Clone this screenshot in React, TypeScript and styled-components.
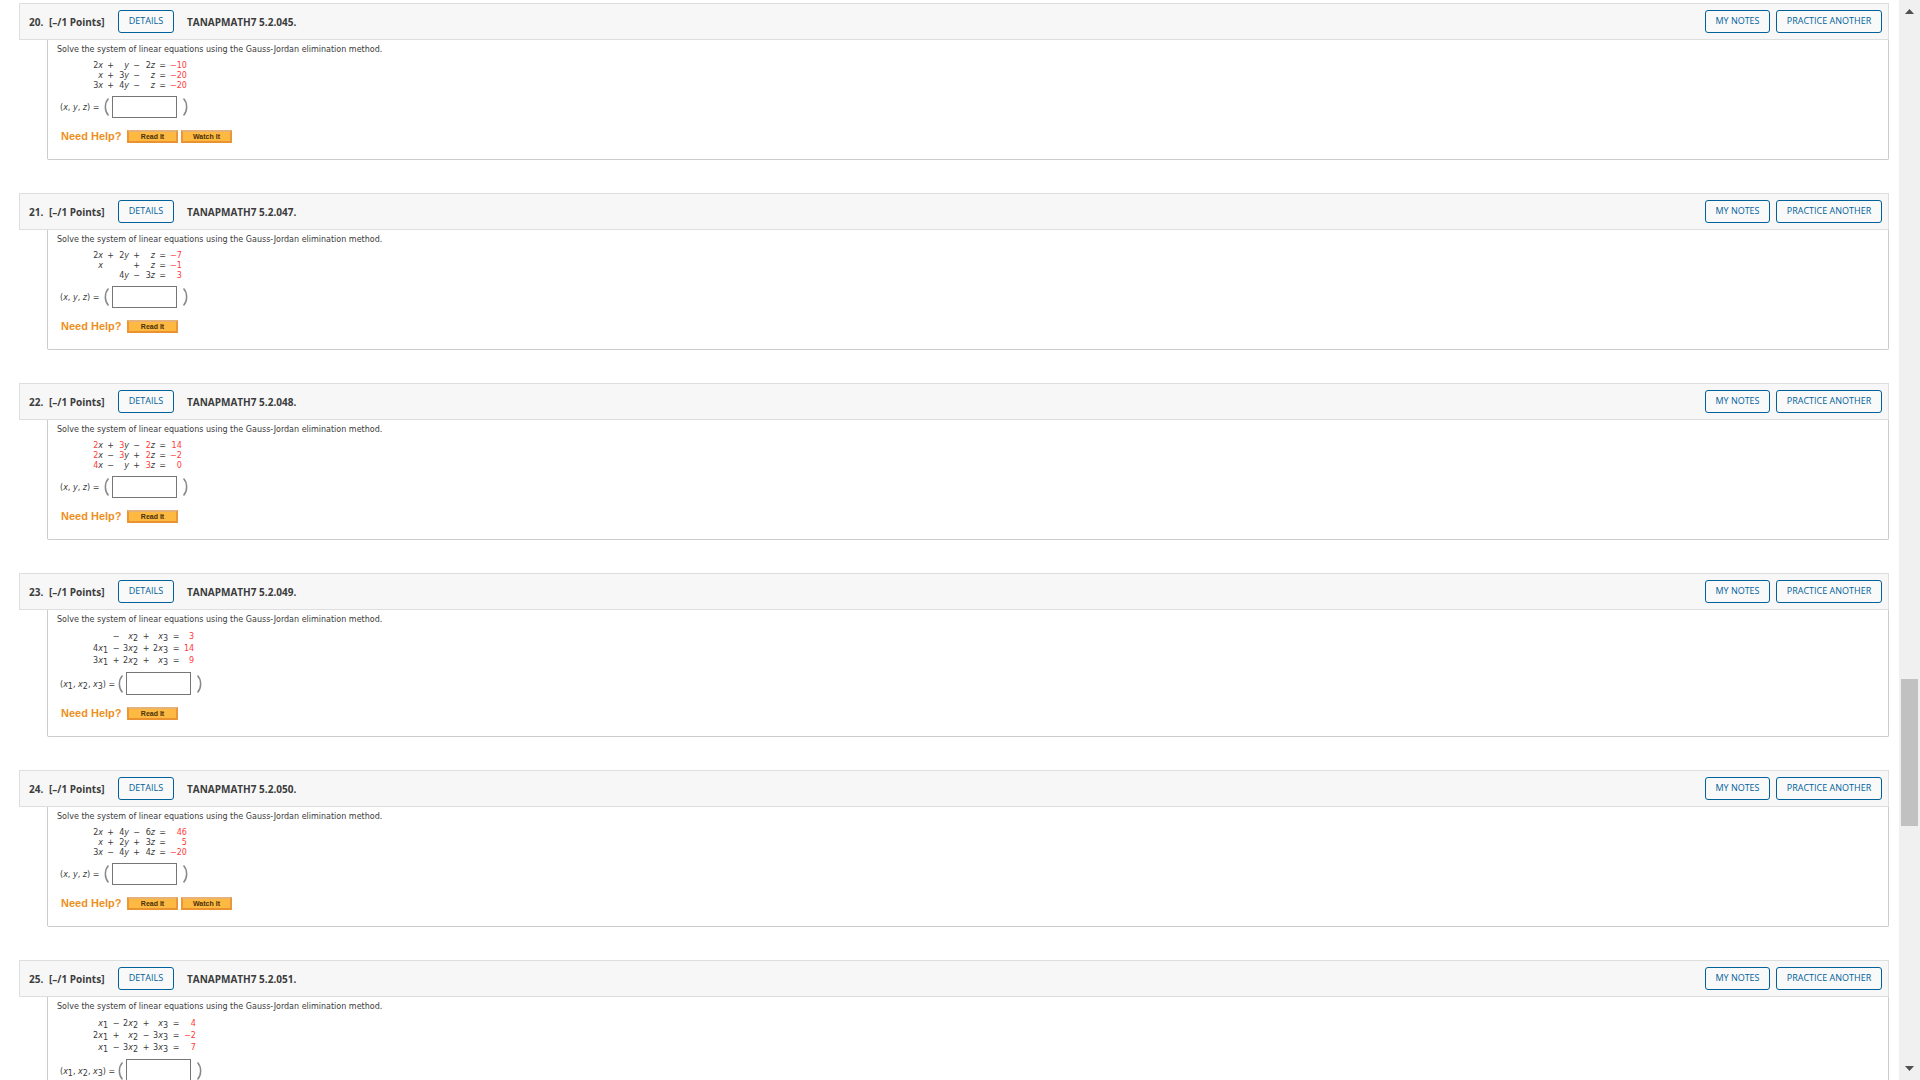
import React from "react";
import styled, { createGlobalStyle } from "styled-components";

const GlobalStyle = createGlobalStyle`
  *, *::before, *::after { box-sizing: border-box; }
  body { margin: 0; background: #fff; overflow: hidden; }
`;

const sans = `"Open Sans", "Noto Sans", sans-serif`;
const verdana = `Verdana, "DejaVu Sans", sans-serif`;
const arial = `Arial, "Liberation Sans", sans-serif`;

const Page = styled.div`
  display: flex;
  height: 100vh;
  overflow: hidden;
`;

const Questions = styled.main`
  flex: 1;
  min-width: 0;
  display: flex;
  flex-direction: column;
  gap: 33px;
  padding: 3px 10px 0 19px;
  overflow: hidden;
`;

const Question = styled.article`
  flex: none;
`;

const Header = styled.header`
  display: flex;
  align-items: center;
  height: 37px;
  padding: 0 6px 0 9px;
  border: 1px solid #dedede;
  background: #f7f7f7;
  color: #3c3c3c;
  font: 700 10px/14px ${sans};
`;

const Number = styled.span`
  width: 20px;
`;

const Points = styled.span`
  width: 69px;
  white-space: nowrap;
`;

const Code = styled.h2`
  flex: 1;
  margin: 0 0 0 13px;
  font: inherit;
`;

const HeaderButton = styled.button<{ $width: number }>`
  width: ${(p) => p.$width}px;
  height: 23px;
  padding: 0 0 2px;
  border: 1px solid #00629b;
  border-radius: 3px;
  background: #f9f9f9;
  color: #00629b;
  font: 400 9px/12px ${sans};
  white-space: nowrap;
`;

const Actions = styled.div`
  display: flex;
  gap: 6px;
`;

const Body = styled.div`
  margin-left: 28px;
  padding: 5px 9px 16px;
  border: 1px solid #ccc;
  border-top: 0;
  border-radius: 0 0 2px 2px;
  color: #3a3a3a;
  font: 400 8px/10px ${verdana};
`;

const Prompt = styled.p`
  margin: 0 0 6px;
`;

const System = styled.div<{ $subscripts: boolean }>`
  display: grid;
  grid-template-columns: ${(p) =>
    p.$subscripts ? "15px 16px 14px 16px 14px 16px max-content" : "10px 15px 11px 15px 11px 15px max-content"};
  grid-auto-rows: ${(p) => (p.$subscripts ? 12 : 10)}px;
  line-height: ${(p) => (p.$subscripts ? 12 : 10)}px;
  margin-left: 36px;
`;

const Term = styled.span`
  display: flex;
  justify-content: flex-end;
  white-space: nowrap;
`;

const Operator = styled.span`
  text-align: center;
`;

const Value = styled.span`
  color: #ff3a3a;
`;

const Sub = styled.sub`
  font-size: 8px;
  line-height: 0;
  vertical-align: -2px;
`;

const Answer = styled.div<{ $subscripts: boolean }>`
  display: flex;
  align-items: center;
  height: ${(p) => (p.$subscripts ? 23 : 22)}px;
  margin: 5px 0 12px 3px;
`;

const AnswerLabel = styled.label<{ $subscripts: boolean }>`
  width: ${(p) => (p.$subscripts ? 58 : 44)}px;
  padding-top: 2px;
  white-space: nowrap;
`;

const Paren = styled.svg`
  width: 5px;
  height: 18px;
  fill: none;
  stroke: #888;
  stroke-width: 1.5;
`;

const AnswerInput = styled.input`
  width: 65px;
  height: 100%;
  margin: 0 6px 0 3px;
  padding: 1px 3px;
  border: 1px solid #767676;
  font: inherit;
`;

const Help = styled.div`
  display: flex;
  align-items: center;
  gap: 3px;
  height: 13px;
  margin-left: 4px;
`;

const HelpLabel = styled.span`
  width: 63px;
  color: #ee8f22;
  font: 700 11px/13px ${arial};
  white-space: nowrap;
`;

const HelpButton = styled.button`
  width: 51px;
  height: 13px;
  padding: 0;
  border: 2px solid;
  border-color: #e6b27a #e9973a #e9922f #e9973a;
  background: #fdb941;
  color: #4a300c;
  font: 700 7px/9px ${arial};
`;

const Scrollbar = styled.aside`
  flex: none;
  display: flex;
  flex-direction: column;
  align-items: center;
  justify-content: space-between;
  width: 21px;
  padding: 9px 0;
  background: #f0f0f0;
`;

const Arrow = styled.svg`
  flex: none;
  width: 9px;
  height: 5px;
  fill: #505050;
`;

const Track = styled.div`
  flex: 1;
  display: flex;
  flex-direction: column;
  align-items: center;
`;

const Spacer = styled.div<{ $grow: number }>`
  flex: ${(p) => p.$grow} 1 0;
`;

const Thumb = styled.div`
  flex: none;
  width: 17px;
  height: 147px;
  background: #c1c1c1;
`;

type Row = { cells: string[]; value: string };

type Problem = {
  number: number;
  code: string;
  rows: Row[];
  subscripts?: boolean;
  redCoefficients?: boolean;
  help: string[];
};

const row = (cells: string, value: string): Row => ({ cells: cells.split(","), value });

const problems: Problem[] = [
  {
    number: 20,
    code: "5.2.045",
    help: ["Read It", "Watch It"],
    rows: [row("2x,+,y,−,2z", "−10"), row("x,+,3y,−,z", "−20"), row("3x,+,4y,−,z", "−20")],
  },
  {
    number: 21,
    code: "5.2.047",
    help: ["Read It"],
    rows: [row("2x,+,2y,+,z", "−7"), row("x,,,+,z", "−1"), row(",,4y,−,3z", "3")],
  },
  {
    number: 22,
    code: "5.2.048",
    help: ["Read It"],
    redCoefficients: true,
    rows: [row("2x,+,3y,−,2z", "14"), row("2x,−,3y,+,2z", "−2"), row("4x,−,y,+,3z", "0")],
  },
  {
    number: 23,
    code: "5.2.049",
    help: ["Read It"],
    subscripts: true,
    rows: [row(",−,x2,+,x3", "3"), row("4x1,−,3x2,+,2x3", "14"), row("3x1,+,2x2,+,x3", "9")],
  },
  {
    number: 24,
    code: "5.2.050",
    help: ["Read It", "Watch It"],
    rows: [row("2x,+,4y,−,6z", "46"), row("x,+,2y,+,3z", "5"), row("3x,−,4y,+,4z", "−20")],
  },
  {
    number: 25,
    code: "5.2.051",
    help: [],
    subscripts: true,
    rows: [row("x1,−,2x2,+,x3", "4"), row("2x1,+,x2,−,3x3", "−2"), row("x1,−,3x2,+,3x3", "7")],
  },
];

function Monomial({ text, red }: { text: string; red?: boolean }) {
  const match = /^(\d*)([xyz])(\d*)$/.exec(text);
  if (!match) return <Term />;
  const [, coefficient, variable, index] = match;
  return (
    <Term>
      <span>
        {red ? <Value>{coefficient}</Value> : coefficient}
        <i>{variable}</i>
        {index && <Sub>{index}</Sub>}
      </span>
    </Term>
  );
}

function ProblemCard({ problem }: { problem: Problem }) {
  const subscripts = Boolean(problem.subscripts);
  const inputId = `answer-${problem.number}`;
  return (
    <Question>
      <Header>
        <Number>{problem.number}.</Number>
        <Points>[–/1 Points]</Points>
        <HeaderButton $width={56}>DETAILS</HeaderButton>
        <Code>TANAPMATH7 {problem.code}.</Code>
        <Actions>
          <HeaderButton $width={65}>MY NOTES</HeaderButton>
          <HeaderButton $width={106}>PRACTICE ANOTHER</HeaderButton>
        </Actions>
      </Header>
      <Body>
        <Prompt>Solve the system of linear equations using the Gauss-Jordan elimination method.</Prompt>
        <System $subscripts={subscripts}>
          {problem.rows.map((r, i) => (
            <React.Fragment key={i}>
              {r.cells.map((cell, j) =>
                j % 2 ? (
                  <Operator key={j}>{cell}</Operator>
                ) : (
                  <Monomial key={j} text={cell} red={problem.redCoefficients} />
                ),
              )}
              <Operator>=</Operator>
              <Term>
                <Value>{r.value}</Value>
              </Term>
            </React.Fragment>
          ))}
        </System>
        <Answer $subscripts={subscripts}>
          <AnswerLabel htmlFor={inputId} $subscripts={subscripts}>
            {subscripts ? (
              <>
                (<i>x</i>
                <Sub>1</Sub>, <i>x</i>
                <Sub>2</Sub>, <i>x</i>
                <Sub>3</Sub>) =
              </>
            ) : (
              <>
                (<i>x</i>, <i>y</i>, <i>z</i>) =
              </>
            )}
          </AnswerLabel>
          <Paren viewBox="0 0 5 18" aria-hidden="true">
            <path d="M4.5 0.5C0.3 5 0.3 13 4.5 17.5" />
          </Paren>
          <AnswerInput id={inputId} type="text" />
          <Paren viewBox="0 0 5 18" aria-hidden="true">
            <path d="M0.5 0.5C4.7 5 4.7 13 0.5 17.5" />
          </Paren>
        </Answer>
        {problem.help.length > 0 && (
          <Help>
            <HelpLabel>Need Help?</HelpLabel>
            {problem.help.map((name) => (
              <HelpButton key={name}>{name}</HelpButton>
            ))}
          </Help>
        )}
      </Body>
    </Question>
  );
}

export default function App() {
  return (
    <>
      <GlobalStyle />
      <Page>
        <Questions>
          {problems.map((problem) => (
            <ProblemCard key={problem.number} problem={problem} />
          ))}
        </Questions>
        <Scrollbar aria-hidden="true">
          <Arrow viewBox="0 0 9 5">
            <path d="M4.5 0L9 5H0Z" />
          </Arrow>
          <Track>
            <Spacer $grow={665} />
            <Thumb />
            <Spacer $grow={240} />
          </Track>
          <Arrow viewBox="0 0 9 5">
            <path d="M0 0H9L4.5 5Z" />
          </Arrow>
        </Scrollbar>
      </Page>
    </>
  );
}
